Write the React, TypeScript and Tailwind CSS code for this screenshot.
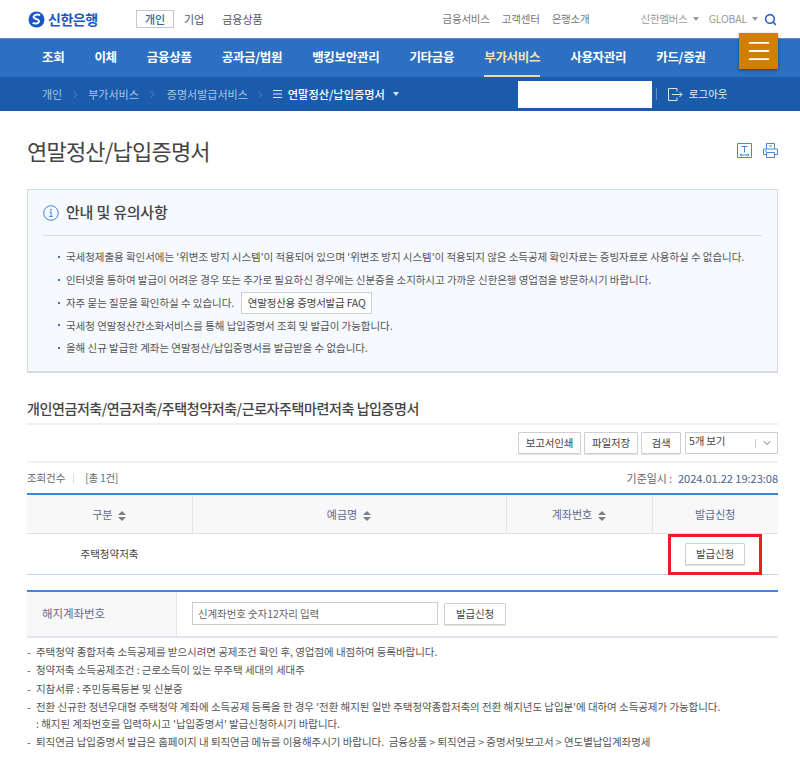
import { ChevronDown, ChevronRight, Menu, Search } from "lucide-react";

const font = { fontFamily: '"Noto Sans CJK KR", "Noto Sans", sans-serif' };

const navItems = ["조회", "이체", "금융상품", "공과금/법원", "뱅킹보안관리", "기타금융", "부가서비스", "사용자관리", "카드/증권"];

const infoItems = [
  "국세청제출용 확인서에는 '위변조 방지 시스템'이 적용되어 있으며 '위변조 방지 시스템'이 적용되지 않은 소득공제 확인자료는 증빙자료로 사용하실 수 없습니다.",
  "인터넷을 통하여 발급이 어려운 경우 또는 추가로 필요하신 경우에는 신분증을 소지하시고 가까운 신한은행 영업점을 방문하시기 바랍니다.",
  "자주 묻는 질문을 확인하실 수 있습니다.",
  "국세청 연말정산간소화서비스를 통해 납입증명서 조회 및 발급이 가능합니다.",
  "올해 신규 발급한 계좌는 연말정산/납입증명서를 발급받을 수 없습니다.",
];

function Caret({ className }: { className: string }) {
  return <span className={`inline-block h-0 w-0 border-x-[3.5px] border-t-[4px] border-x-transparent ${className}`} />;
}

function SortIcon() {
  return (
    <svg width="8" height="10" viewBox="0 0 8 10" className="ml-[6px] inline-block" fill="#7a7f8a">
      <path d="M4 0 8 4H0Z" />
      <path d="M4 10 0 6H8Z" />
    </svg>
  );
}

function SmallButton({ children, className = "" }: { children: string; className?: string }) {
  return (
    <button className={`h-[22px] rounded-[1px] border border-[#cfcfcf] bg-white text-[10.5px] tracking-[-0.2px] text-[#444] shadow-[0_1px_0_#e2e2e2] ${className}`}>
      {children}
    </button>
  );
}

export default function App() {
  return (
    <div style={font} className="relative h-[764px] w-[800px] overflow-hidden bg-white">
      {/* 상단 */}
      <header className="flex h-[38px] items-center pl-[28px] pr-[23px]">
        <svg width="17" height="17" viewBox="0 0 17 17">
          <circle cx="8.5" cy="8.5" r="8" fill="#1a56c4" />
          <path d="M12 4.4C10 3 6 3.4 5.6 5.6 5.2 8 10.4 7.6 11 10c.4 2-3 3.4-6.400 1.800" fill="none" stroke="#fff" strokeWidth="2" />
        </svg>
        <span className="ml-[3px] w-[54px] whitespace-nowrap text-[14px] font-bold tracking-[-0.5px] text-[#1a56c4]">신한은행</span>
        <span className="ml-[34px] flex h-[18px] w-[38px] items-center justify-center border border-[#c9c9c9] text-[11px] font-medium text-[#3f5f9a]">개인</span>
        <span className="ml-[10px] text-[11px] text-[#555]">기업</span>
        <span className="ml-[18px] text-[11px] text-[#555]">금융상품</span>
        <div className="ml-auto flex items-center text-[10.500px] tracking-[-0.2px] text-[#777]">
          <span>금융서비스</span>
          <span className="ml-[12px]">고객센터</span>
          <span className="ml-[12px]">은행소개</span>
          <span className="ml-[51px] flex items-center gap-[5px] text-[#999]">신한멤버스<Caret className="border-t-[#999]" /></span>
          <span className="ml-[10px] flex items-center gap-[5px] text-[#999]">GLOBAL<Caret className="border-t-[#999]" /></span>
          <Search className="ml-[6px] h-[13px] w-[13px] text-[#2f5fc4]" strokeWidth={3} />
        </div>
      </header>

      {/* 메뉴 */}
      <nav className="flex h-[39px] items-stretch gap-[30px] border-t border-[#5a8fd0] bg-[#2d6fc1] pl-[42px]">
        {navItems.map((item) => (
          <span
            key={item}
            className={`flex items-center whitespace-nowrap border-b-2 text-[12.500px] font-bold tracking-[-0.3px] ${
              item === "부가서비스" ? "border-[#f0d9a0] text-[#f5e2b0]" : "border-transparent text-white"
            }`}
          >
            {item}
          </span>
        ))}
      </nav>

      <div className="absolute left-[739px] top-[33px] flex h-[36px] w-[39px] items-center justify-center bg-[#d17f00] shadow-[0_1px_3px_rgba(0,0,0,0.4)]">
        <Menu className="h-[28px] w-[28px] text-white" strokeWidth={1.6} />
      </div>

      {/* 경로 */}
      <div className="flex h-[34px] items-center bg-[#1a5cab] pl-[42px] text-[11px] text-[#a9c3e4]">
        <span>개인</span>
        <ChevronRight className="mx-[7.5px] h-[11px] w-[11px] text-[#5d8cc6]" />
        <span>부가서비스</span>
        <ChevronRight className="mx-[8.5px] h-[11px] w-[11px] text-[#5d8cc6]" />
        <span>증명서발급서비스</span>
        <ChevronRight className="mx-[7px] h-[11px] w-[11px] text-[#5d8cc6]" />
        <svg width="9" height="8" viewBox="0 0 9 8" fill="#dbe6f5"><path d="M0 0h9v1H0zM0 3.500h9v1H0zM0 7h9v1H0z" /></svg>
        <span className="ml-[6px] text-[11.200px] font-medium text-white">연말정산/납입증명서</span>
        <Caret className="ml-[8px] border-t-[#dbe6f5]" />
        <div className="ml-[119px] h-[27px] w-[134px] bg-white" />
        <span className="ml-[4px] h-[12px] w-px bg-[#5d8cc6]" />
        <svg width="16" height="16" viewBox="0 0 16 16" fill="none" stroke="#dbe6f5" className="ml-[10px]">
          <path d="M10 2.500H1.500v12H10M10 14.500v-3M10 5.500v-3M5 8.500h10M12.500 6l2.500 2.500-2.500 2.500" />
        </svg>
        <span className="ml-[6px] text-[10.500px] text-[#e6eef9]">로그아웃</span>
      </div>

      <main className="px-[22px] pl-[27px]">
        <div className="flex h-[78px] items-center justify-between">
          <h1 className="text-[22px] font-normal tracking-[-0.8px] text-[#444]">연말정산/납입증명서</h1>
          <div className="flex items-center gap-[11px]">
            <svg width="15" height="15" viewBox="0 0 15 15" fill="none" stroke="#4f86cf">
              <path d="M.500.500h14v14H.500zM4.500 3.500h6M7.500 3.500v6M3 12h9M3 12l1.500-1.200M3 12l1.500 1.200M12 12l-1.500-1.200M12 12l-1.500 1.200" />
            </svg>
            <svg width="15" height="15" viewBox="0 0 15 15" fill="none" stroke="#4f86cf">
              <path d="M3.500 6V.500h8V6M.500 6h14v5.500H11.500M3.500 11.500H.500V6M3.500 9.500h8v5h-8zM6 3h3M2 8h2" />
            </svg>
          </div>
        </div>

        {/* 안내 */}
        <section className="h-[184px] border border-[#d5dbe6] border-b-2 bg-[#f6f9fe] px-[15px]">
          <div className="flex h-[46px] items-center gap-[7px] border-b border-[#d9dde3]">
            <svg width="16" height="16" viewBox="0 0 16 16" fill="none" stroke="#3d86dc">
              <circle cx="8" cy="8" r="7.300" />
              <path d="M6.500 7h1.600v4.500M6.300 11.500h3.400" />
              <path d="M8 4v1.500" strokeWidth="1.500" />
            </svg>
            <h2 className="text-[15px] font-medium tracking-[-0.2px] text-[#444]">안내 및 유의사항</h2>
          </div>
          <ul className="pt-[10px] pl-[15px]">
            {infoItems.map((item) => (
              <li key={item} className="flex h-[22.700px] items-center whitespace-nowrap text-[10.500px] tracking-[-0.05px] text-[#555]">
                <span className="mr-[6px] h-[2px] w-[2px] bg-[#3f72b8]" />
                {item}
                {item.startsWith("자주") && (
                  <SmallButton className="ml-[7px] h-[17px] w-[131px] rounded-none shadow-none">연말정산용 증명서발급 FAQ</SmallButton>
                )}
              </li>
            ))}
          </ul>
        </section>

        {/* 납입증명서 */}
        <h3 className="mt-[26px] border-b-2 border-[#f1f1f1] pb-[6px] text-[14px] font-medium leading-[18px] tracking-[-0.41px] text-[#444]">
          개인연금저축/연금저축/주택청약저축/근로자주택마련저축 납입증명서
        </h3>
        <div className="flex h-[38px] items-center justify-end gap-[3px] border-b-2 border-[#f1f1f1]">
          <SmallButton className="w-[63px]">보고서인쇄</SmallButton>
          <SmallButton className="w-[54px]">파일저장</SmallButton>
          <SmallButton className="w-[40px]">검색</SmallButton>
          <div className="ml-[1px] flex h-[22px] w-[93px] items-start border border-[#cfcfcf] pl-[3px] text-[10.500px] leading-[16px] tracking-[-0.2px] text-[#444]">
            5개 보기
            <span className="ml-auto mr-[4px] mt-[4px] flex items-center gap-[5px]">
              <span className="h-[9px] w-px bg-[#ccc]" />
              <ChevronDown className="h-[12px] w-[12px] text-[#666]" />
            </span>
          </div>
        </div>

        <div className="flex h-[30px] items-center text-[10.500px] tracking-[-0.1px] text-[#666]">
          <span>조회건수</span>
          <span className="mx-[8px] h-[10px] w-px bg-[#ddd]" />
          <span className="ml-[3px] tracking-[-0.3px]">[총 <span className="text-[#3d7cd0]">1</span>건]</span>
          <span className="ml-auto text-[11px]">기준일시 :</span>
          <span className="ml-[6px] text-[11.200px] text-[#4d5f8a]">2024.01.22 19:23:08</span>
        </div>

        <table className="w-[751px] table-fixed border-t-2 border-[#3d86dc] text-[11px]">
          <thead>
            <tr className="h-[39px] border-b border-[#e0e0e0] bg-[#f8f8f8] text-[#5c6a92]">
              <th className="w-[165px] border-r border-[#e6e6e6] font-normal">구분<SortIcon /></th>
              <th className="w-[314px] border-r border-[#e6e6e6] font-normal">예금명<SortIcon /></th>
              <th className="w-[146px] border-r border-[#e6e6e6] font-normal">계좌번호<SortIcon /></th>
              <th className="font-normal">발급신청</th>
            </tr>
          </thead>
          <tbody>
            <tr className="h-[41px] border-b border-[#c6d0e6]">
              <td className="text-center text-[10.500px] text-[#444]">주택청약저축</td>
              <td />
              <td />
              <td className="text-center">
                <SmallButton className="w-[60px]">발급신청</SmallButton>
              </td>
            </tr>
          </tbody>
        </table>

        {/* 해지계좌 */}
        <div className="mt-[15px] flex h-[48px] border-t-2 border-b-2 border-t-[#3d86dc] border-b-[#e4e6ee]">
          <div className="flex w-[150px] items-center border-r border-[#e6e6e6] bg-[#f8f8f8] pl-[15px] text-[11.500px] tracking-[-0.1px] text-[#5c6a92]">
            해지계좌번호
          </div>
          <div className="flex items-center pl-[15px]">
            <div className="flex h-[23px] w-[246px] items-center border border-[#ccc] pl-[5px] text-[10.500px] tracking-[-0.1px] text-[#666]">
              신계좌번호 숫자12자리 입력
            </div>
            <SmallButton className="ml-[6px] w-[62px]">발급신청</SmallButton>
          </div>
        </div>

        <ul className="pt-[5px] text-[10.500px] tracking-[-0.05px] text-[#555]">
          <li className="flex h-[18.500px] items-center whitespace-nowrap"><span className="w-[9px]">-</span>주택청약 종합저축 소득공제를 받으시려면 공제조건 확인 후, 영업점에 내점하여 등록바랍니다.</li>
          <li className="flex h-[18.500px] items-center whitespace-nowrap"><span className="w-[9px]">-</span>청약저축 소득공제조건 : 근로소득이 있는 무주택 세대의 세대주</li>
          <li className="flex h-[18.500px] items-center whitespace-nowrap"><span className="w-[9px]">-</span>지참서류 : 주민등록등본 및 신분증</li>
          <li className="flex h-[17px] items-center whitespace-nowrap"><span className="w-[9px]">-</span>전환 신규한 청년우대형 주택청약 계좌에 소득공제 등록을 한 경우 '전환 해지된 일반 주택청약종합저축의 전환 해지년도 납입분'에 대하여 소득공제가 가능합니다.</li>
          <li className="flex h-[17px] items-center whitespace-nowrap pl-[9px]">: 해지된 계좌번호를 입력하시고 '납입증명서' 발급신청하시기 바랍니다.</li>
          <li className="flex h-[20px] items-center whitespace-nowrap"><span className="w-[9px]">-</span>퇴직연금 납입증명서 발급은 홈페이지 내 퇴직연금 메뉴를 이용해주시기 바랍니다.&nbsp; 금융상품 &gt; 퇴직연금 &gt; 증명서및보고서 &gt; 연도별납입계좌명세</li>
        </ul>
      </main>

      <div className="absolute left-[668px] top-[534px] h-[41px] w-[94px] border-[3px] border-[#ee1c25]" />
    </div>
  );
}
